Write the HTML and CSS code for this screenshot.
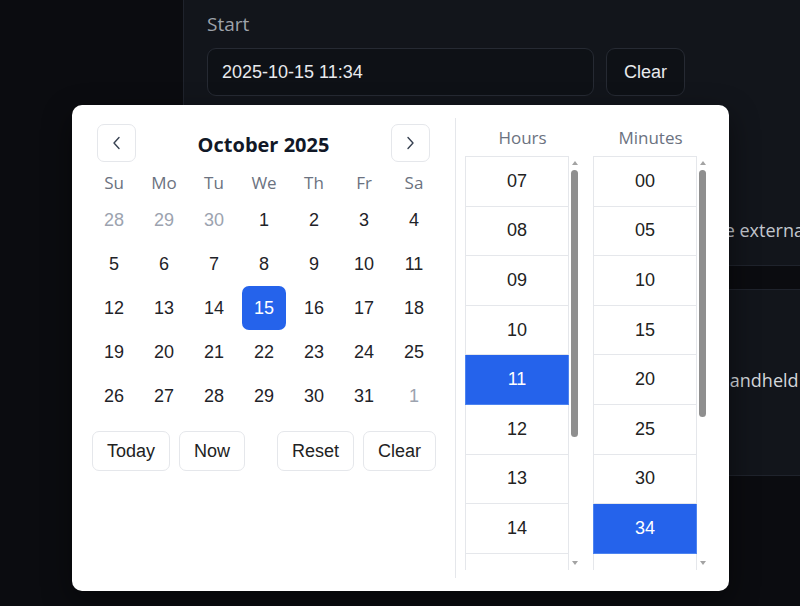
FILE: index.html
```html
<!DOCTYPE html>
<html lang="en">
<head>
<meta charset="utf-8">
<title>Date time picker</title>
<link rel="stylesheet" href="styles.css">
</head>
<body>
<div class="layout">
  <aside class="sidebar"></aside>
  <main class="main">
    <section class="card card-top">
      <label class="field-label">Start</label>
      <div class="field-row">
        <div class="input">2025-10-15 11:34</div>
        <button class="dark-btn">Clear</button>
      </div>
      <p class="hint">Times are saved in the local zone unless you enable sync to the external calendar</p>
    </section>
    <section class="card card-second">
      <p class="device">Reminder will be delivered to your desktop, tablet, or mobile handheld</p>
    </section>
  </main>
</div>

<div class="popover">
  <div class="calendar">
    <div class="cal-head">
      <button class="nav-btn" aria-label="Previous month">
        <svg width="12" height="14" viewBox="0 0 12 14"><path d="M8 1.5 L3 7 L8 12.5" fill="none" stroke="#374151" stroke-width="1.4" stroke-linecap="round" stroke-linejoin="round"/></svg>
      </button>
      <div class="cal-title">October 2025</div>
      <button class="nav-btn" aria-label="Next month">
        <svg width="12" height="14" viewBox="0 0 12 14"><path d="M4 1.5 L9 7 L4 12.5" fill="none" stroke="#374151" stroke-width="1.4" stroke-linecap="round" stroke-linejoin="round"/></svg>
      </button>
    </div>
    <div class="weekdays">
      <span>Su</span><span>Mo</span><span>Tu</span><span>We</span><span>Th</span><span>Fr</span><span>Sa</span>
    </div>
    <div class="days">
      <span class="muted">28</span><span class="muted">29</span><span class="muted">30</span><span>1</span><span>2</span><span>3</span><span>4</span>
      <span>5</span><span>6</span><span>7</span><span>8</span><span>9</span><span>10</span><span>11</span>
      <span>12</span><span>13</span><span>14</span><span class="sel">15</span><span>16</span><span>17</span><span>18</span>
      <span>19</span><span>20</span><span>21</span><span>22</span><span>23</span><span>24</span><span>25</span>
      <span>26</span><span>27</span><span>28</span><span>29</span><span>30</span><span>31</span><span class="muted">1</span>
    </div>
    <div class="cal-foot">
      <div class="btn-group"><button class="btn">Today</button><button class="btn">Now</button></div>
      <div class="btn-group"><button class="btn">Reset</button><button class="btn">Clear</button></div>
    </div>
  </div>
  <div class="divider"></div>
  <div class="time">
    <div class="time-col">
      <div class="time-label">Hours</div>
      <div class="time-box">
        <div class="items">
          <div class="item">07</div><div class="item">08</div><div class="item">09</div><div class="item">10</div>
          <div class="item sel">11</div><div class="item">12</div><div class="item">13</div><div class="item">14</div>
          <div class="item">15</div>
        </div>
        <div class="sb">
          <span class="arrow-up"></span>
          <span class="thumb" style="height:267px"></span>
          <span class="sb-fill"></span>
          <span class="arrow-down"></span>
        </div>
      </div>
    </div>
    <div class="time-col">
      <div class="time-label">Minutes</div>
      <div class="time-box">
        <div class="items">
          <div class="item">00</div><div class="item">05</div><div class="item">10</div><div class="item">15</div>
          <div class="item">20</div><div class="item">25</div><div class="item">30</div><div class="item sel">34</div>
          <div class="item">35</div>
        </div>
        <div class="sb">
          <span class="arrow-up"></span>
          <span class="thumb" style="height:247px"></span>
          <span class="sb-fill"></span>
          <span class="arrow-down"></span>
        </div>
      </div>
    </div>
  </div>
</div>
</body>
</html>
```

FILE: styles.css
```css
* { box-sizing: border-box; }

html, body {
  margin: 0;
  padding: 0;
}

body {
  width: 800px;
  height: 606px;
  overflow: hidden;
  background: #0b0c10;
  font-family: "Open Sans", "Noto Sans", sans-serif;
  position: relative;
}

.layout {
  display: grid;
  grid-template-columns: 183px 1fr;
  height: 606px;
}

.sidebar { background: #0b0c10; }

.main {
  display: flex;
  flex-direction: column;
  gap: 23px;
  overflow: hidden;
}

.card {
  background: #12151b;
  border-left: 1px solid #1f232c;
  border-bottom: 1px solid #1f232c;
}

.card-top {
  height: 266px;
  padding: 11px 0 0 23px;
}

.card-second {
  height: 187px;
  border-top: 1px solid #1f232c;
  padding: 0 0 0 23px;
}

.field-label {
  display: block;
  font-size: 19px;
  line-height: 26px;
  color: #9ea3ab;
}

.field-row {
  display: flex;
  gap: 12px;
  margin-top: 11px;
}

.input {
  width: 387px;
  height: 48px;
  border: 1px solid #262a33;
  border-radius: 9px;
  background: #0e1116;
  padding: 0 14px;
  display: flex;
  align-items: center;
  font-family: "Liberation Sans", Arial, sans-serif;
  font-size: 18px;
  color: #e8eaed;
}

.dark-btn {
  width: 79px;
  height: 48px;
  border: 1px solid #262a33;
  border-radius: 9px;
  background: #0e1116;
  font-family: "Liberation Sans", Arial, sans-serif;
  font-size: 18px;
  color: #e8eaed;
  padding: 0;
}

.hint {
  margin: 121px 0 0 0;
  font-size: 18px;
  line-height: 26px;
  color: #c3c7ce;
  white-space: nowrap;
}

.device {
  margin: 77px 0 0 0;
  font-size: 18px;
  line-height: 26px;
  color: #d4d7dc;
  white-space: nowrap;
}

/* Popover */
.popover {
  position: absolute;
  left: 72px;
  top: 105px;
  width: 657px;
  height: 486px;
  background: #ffffff;
  border-radius: 10px;
  box-shadow: 0 10px 30px rgba(0, 0, 0, 0.45);
  display: flex;
  padding: 19px 21px 21px 20px;
}

.calendar {
  width: 344px;
  flex: none;
}

.cal-head {
  display: flex;
  align-items: center;
  justify-content: space-between;
  height: 38px;
  padding: 0 6px 0 5px;
}

.nav-btn {
  width: 39px;
  height: 38px;
  border: 1px solid #e5e7eb;
  border-radius: 7px;
  background: #fff;
  display: flex;
  align-items: center;
  justify-content: center;
  padding: 0;
}

.cal-title {
  font-size: 20px;
  font-weight: 700;
  color: #111827;
  margin-top: 3px;
}

.weekdays, .days {
  display: grid;
  grid-template-columns: repeat(7, 44px);
  column-gap: 6px;
}

.weekdays {
  margin-top: 6px;
  height: 30px;
}

.weekdays span {
  text-align: center;
  font-size: 17px;
  line-height: 30px;
  color: #6b7280;
}

.days span {
  height: 44px;
  line-height: 44px;
  text-align: center;
  font-family: "Liberation Sans", Arial, sans-serif;
  font-size: 18px;
  color: #1f2328;
  border-radius: 7px;
}

.days span.muted { color: #9ca3af; }

.days span.sel {
  background: #2563eb;
  color: #ffffff;
}

.cal-foot {
  display: flex;
  justify-content: space-between;
  margin-top: 13px;
}

.btn-group {
  display: flex;
  gap: 9px;
}

.btn {
  height: 40px;
  padding: 0 14px;
  border: 1px solid #e5e7eb;
  border-radius: 7px;
  background: #fff;
  font-family: "Liberation Sans", Arial, sans-serif;
  font-size: 18px;
  color: #222;
}

.divider {
  width: 1px;
  background: #e5e7eb;
  margin: -6px 9px -8px 19px;
  flex: none;
}

.time {
  display: flex;
  gap: 13px;
}

.time-col {
  display: flex;
  flex-direction: column;
  width: 115px;
}

.time-label {
  text-align: center;
  font-size: 17px;
  line-height: 28px;
  color: #6b7280;
  margin-bottom: 4px;
}

.time-box {
  display: flex;
  height: 414px;
}

.items {
  width: 104px;
  overflow: hidden;
  border-top: 1px solid #e5e7eb;
}

.item {
  height: 49.6px;
  border-left: 1px solid #e5e7eb;
  border-right: 1px solid #e5e7eb;
  border-bottom: 1px solid #e5e7eb;
  display: flex;
  align-items: center;
  justify-content: center;
  font-family: "Liberation Sans", Arial, sans-serif;
  font-size: 18px;
  color: #222;
}

.item.sel {
  background: #2563eb;
  border-color: #4d84f0;
  color: #fff;
}

.sb {
  width: 11px;
  display: flex;
  flex-direction: column;
  align-items: center;
  padding: 5px 0 5px 0;
}

.arrow-up, .arrow-down {
  width: 0;
  height: 0;
  border-left: 3.5px solid transparent;
  border-right: 3.5px solid transparent;
  flex: none;
}

.arrow-up { border-bottom: 4px solid #a3a3a3; }
.arrow-down { border-top: 4px solid #a3a3a3; }

.thumb {
  width: 7px;
  margin-top: 5px;
  border-radius: 4px;
  background: #8f8f8f;
  flex: none;
}

.sb-fill { flex: 1; }
```
